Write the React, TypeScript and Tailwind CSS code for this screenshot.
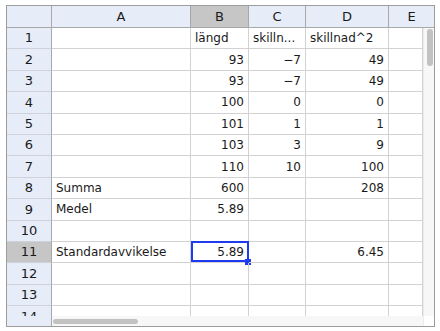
import React from "react";

const cols = [
  { key: "A", w: 139 },
  { key: "B", w: 58 },
  { key: "C", w: 57 },
  { key: "D", w: 83 },
  { key: "E", w: 34 },
];

type Cell = { t: string; r?: boolean };
const rows: Cell[][] = [
  [{ t: "" }, { t: "längd" }, { t: "skilln..." }, { t: "skillnad^2" }, { t: "" }],
  [{ t: "" }, { t: "93", r: true }, { t: "−7", r: true }, { t: "49", r: true }, { t: "" }],
  [{ t: "" }, { t: "93", r: true }, { t: "−7", r: true }, { t: "49", r: true }, { t: "" }],
  [{ t: "" }, { t: "100", r: true }, { t: "0", r: true }, { t: "0", r: true }, { t: "" }],
  [{ t: "" }, { t: "101", r: true }, { t: "1", r: true }, { t: "1", r: true }, { t: "" }],
  [{ t: "" }, { t: "103", r: true }, { t: "3", r: true }, { t: "9", r: true }, { t: "" }],
  [{ t: "" }, { t: "110", r: true }, { t: "10", r: true }, { t: "100", r: true }, { t: "" }],
  [{ t: "Summa" }, { t: "600", r: true }, { t: "" }, { t: "208", r: true }, { t: "" }],
  [{ t: "Medel" }, { t: "5.89", r: true }, { t: "" }, { t: "" }, { t: "" }],
  [{ t: "" }, { t: "" }, { t: "" }, { t: "" }, { t: "" }],
  [{ t: "Standardavvikelse" }, { t: "5.89", r: true }, { t: "" }, { t: "6.45", r: true }, { t: "" }],
  [{ t: "" }, { t: "" }, { t: "" }, { t: "" }, { t: "" }],
  [{ t: "" }, { t: "" }, { t: "" }, { t: "" }, { t: "" }],
  [{ t: "" }, { t: "" }, { t: "" }, { t: "" }, { t: "" }],
];

export default function App() {
  return (
    <div
      className="w-[440px] h-[331px] bg-white pl-[6px] pt-[5px] text-[#1a1a1a]"
      style={{ fontFamily: '"DejaVu Sans", "Liberation Sans", sans-serif' }}
    >
      <div className="w-[429px] h-[322px] border border-[#9c9c9c] flex flex-col bg-white">
        {/* Header row */}
        <div className="flex h-[22px] shrink-0 border-b border-[#a8a8a8]">
          <div className="w-[45px] shrink-0 bg-[#e6edf8] border-r border-[#a8a8a8]" />
          {cols.map((c, i) => (
            <div
              key={c.key}
              className={
                "shrink-0 flex items-center justify-center text-[13px] border-r border-[#a8a8a8] " +
                (c.key === "B" ? "bg-[#c6c6c6]" : "bg-[#e6edf8]") +
                (i === cols.length - 1 ? " border-r-0" : "")
              }
              style={{ width: i === cols.length - 1 ? c.w + 11 : c.w }}
            >
              {c.key}
            </div>
          ))}
        </div>
        {/* Body */}
        <div className="flex flex-1 min-h-0">
          <div className="flex flex-col w-[416px] overflow-hidden">
            <div className="flex-1 min-h-0 overflow-hidden">
              {rows.map((row, ri) => (
                <div key={ri} className="flex h-[21.4px] shrink-0">
                  <div
                    className={
                      "w-[45px] shrink-0 flex items-center justify-center text-[13px] border-r border-r-[#a8a8a8] border-b border-b-[#cdd2da] " +
                      (ri === 10 ? "bg-[#c6c6c6]" : "bg-[#e6edf8]")
                    }
                  >
                    {ri + 1}
                  </div>
                  {row.map((cell, ci) => (
                    <div
                      key={ci}
                      className={
                        "relative shrink-0 flex items-center px-[4px] text-[12px] whitespace-nowrap overflow-visible border-r border-b border-[#d2d2d2] " +
                        (cell.r ? "justify-end" : "justify-start")
                      }
                      style={{ width: cols[ci].w }}
                    >
                      {cell.t}
                      {ri === 10 && ci === 1 && (
                        <>
                          <div className="absolute left-0 top-[-1px] right-[-1px] bottom-0 border-2 border-[#1f3bf2]" />
                          <div className="absolute right-[-3px] bottom-[-3px] w-[6px] h-[6px] bg-[#1f3bf2]" />
                        </>
                      )}
                    </div>
                  ))}
                </div>
              ))}
            </div>
            {/* horizontal scrollbar */}
            <div className="flex h-[10px] shrink-0">
              <div className="w-[45px] shrink-0 bg-[#e6edf8] border-r border-[#a8a8a8]" />
              <div className="flex-1 bg-[#f7f7f7] flex items-center pl-[1px]">
                <div className="w-[85px] h-[5px] rounded-full bg-[#c2c2c2]" />
              </div>
            </div>
          </div>
          {/* vertical scrollbar */}
          <div className="w-[11px] shrink-0 flex flex-col bg-[#f7f7f7] border-l border-[#ececec]">
            <div className="pt-[1px] pl-[3px]">
              <div className="w-[6px] h-[37px] rounded-full bg-[#c2c2c2]" />
            </div>
            <div className="flex-1" />
            <div className="h-[10px] bg-white" />
          </div>
        </div>
      </div>
    </div>
  );
}
